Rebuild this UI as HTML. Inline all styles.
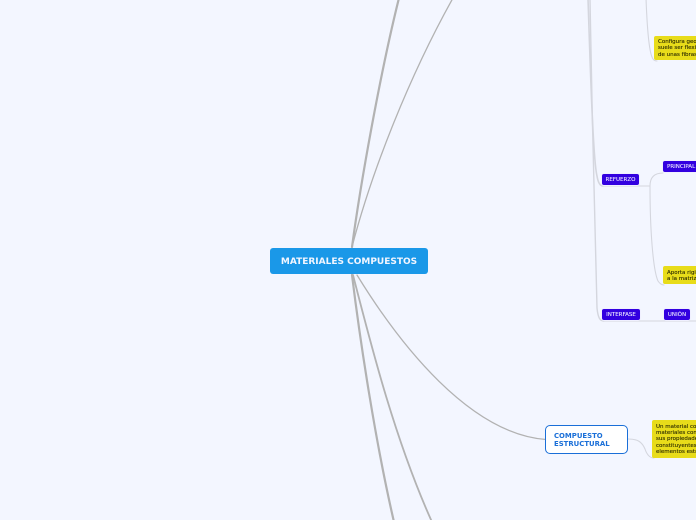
<!DOCTYPE html>
<html>
<head>
<meta charset="utf-8">
<style>
html,body{margin:0;padding:0;width:696px;height:520px;overflow:hidden;background:#f3f6ff;}
body{position:relative;font-family:"DejaVu Sans",sans-serif;}
svg{position:absolute;left:0;top:0;}
.n{position:absolute;box-sizing:border-box;white-space:nowrap;overflow:hidden;}
.p{background:#3200e0;color:#ecE8ff;font-size:5.5px;line-height:13.5px;height:11px;border-radius:2px;text-align:center;box-shadow:0 0 0 1px #f0f0ff;-webkit-text-stroke:.1px #ece8ff;}
.y{background:#e8dc1a;color:#2c2c00;font-size:5.5px;line-height:6.4px;border-radius:2px 0 0 2px;-webkit-text-stroke:.12px #2c2c00;}
</style>
</head>
<body>
<svg width="696" height="520" viewBox="0 0 696 520" fill="none">
<g stroke="#b2b2b2" stroke-linecap="round">
<path d="M352 247C361 180 381 70 399 -2" stroke-width="2.200"/>
<path d="M352 247C372 170 410 75 453 -2" stroke-width="1.300"/>
<path d="M352 275C360 340 375 440 394 522" stroke-width="2.200"/>
<path d="M353 275C371 345 395 440 432 522" stroke-width="1.800"/>
<path d="M357 275C400 345 470 434 546 439.500" stroke-width="1.300"/>
</g>
<g stroke="#d4d6de" stroke-linecap="round">
<path d="M588 -2C590 60 593 160 597 176C598 182 600 186 603 186" stroke-width="1.600"/>
<path d="M590 0C592 100 595 260 597 308C598 318 600 321 604 321" stroke-width="1.400"/>
<path d="M603 186H650" stroke-width="1.100"/>
<path d="M604 321H696" stroke-width="1.100"/>
<path d="M650 186C650 178 654 173 663 173" stroke-width="1.100"/>
<path d="M650 186C650 230 653 270 658 281C660 284 662 285 664 285" stroke-width="1.100"/>
<path d="M646 -2C647 25 649 50 652 57C653 60 655 61 657 61" stroke-width="1.100"/>
<path d="M628 439C638 439 642 442 645 449C647 455 650 458 654 458" stroke-width="1.100"/>
</g>
</svg>

<div class="n" style="left:270px;top:247.500px;width:158px;height:26.500px;background:#1a98e8;border-radius:3px;color:#f3f6ff;font-weight:bold;font-size:9px;line-height:28px;text-align:center;">MATERIALES COMPUESTOS</div>

<div class="n" style="left:545px;top:425px;width:83px;height:29px;background:#fff;border:1px solid #1a6fd8;border-radius:5px;color:#1a6fd8;font-weight:bold;font-size:6.900px;line-height:8px;padding:6px 0 0 8px;">COMPUESTO<br>ESTRUCTURAL</div>

<div class="n p" style="left:602px;top:174px;width:37px;">REFUERZO</div>
<div class="n p" style="left:602px;top:309px;width:38px;">INTERFASE</div>
<div class="n p" style="left:663px;top:161px;width:40px;padding-left:4px;text-align:left;">PRINCIPAL</div>
<div class="n p" style="left:664px;top:309px;width:26px;">UNIÓN</div>

<div class="n y" style="left:654px;top:36px;width:42px;height:24px;padding:3px 0 0 4px;">Configura geometría<br>suele ser flexible<br>de unas fibras</div>
<div class="n y" style="left:663px;top:266px;width:33px;height:18px;padding:3.500px 0 0 4px;">Aporta rigidez<br>a la matriz</div>
<div class="n y" style="left:652px;top:420px;width:44px;height:38px;padding:3.500px 0 0 4px;">Un material compuesto<br>materiales combinados<br>sus propiedades<br>constituyentes<br>elementos estructurales</div>
</body>
</html>
